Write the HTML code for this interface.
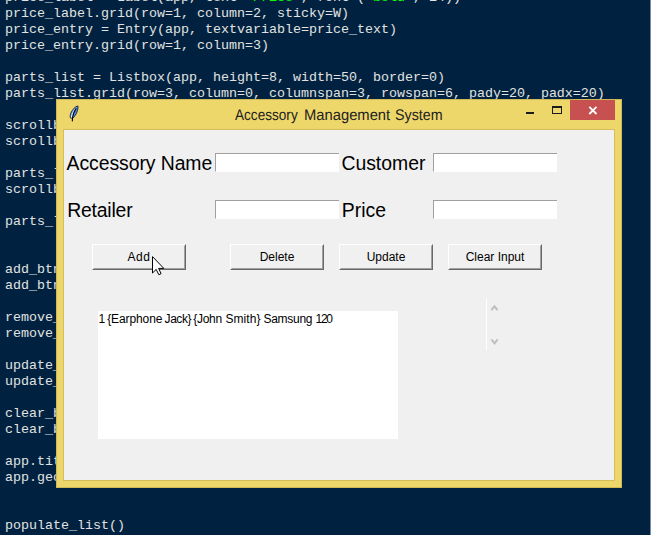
<!DOCTYPE html>
<html>
<head>
<meta charset="utf-8">
<title>Accessory Management System</title>
<style>
html,body{margin:0;padding:0;}
body{width:651px;height:535px;overflow:hidden;background:#002240;position:relative;font-family:"Liberation Sans",sans-serif;}
#code{position:absolute;left:5px;top:-10px;margin:0;font-family:"Liberation Mono",monospace;font-size:13.333px;line-height:16px;color:#e2e2e2;white-space:pre;}
#code .s{color:#02ff02;}
#win{position:absolute;left:56px;top:99px;width:566px;height:389px;background:#eed76a;box-sizing:border-box;border:1px solid #cfb856;}
#title{position:absolute;left:178.6px;top:6.8px;width:300px;height:18px;white-space:pre;font-size:15.4px;line-height:18px;color:#222;}
#title span{position:absolute;top:0;transform-origin:0 0;text-rendering:geometricPrecision;}
#close{position:absolute;left:513px;top:0;width:45px;height:20px;background:#c75050;}
#client{position:absolute;left:7px;top:30px;width:550px;height:350px;background:#f0f0f0;box-shadow:0 0 0 1px #d4bd5a;}
.lbl{position:absolute;font-size:19.4px;line-height:22px;color:#000;white-space:nowrap;}
.ent{position:absolute;width:124px;height:19px;background:#fff;box-sizing:border-box;border-top:1px solid #a0a0a0;border-left:1px solid #a0a0a0;border-bottom:1px solid #fff;}
.btn{position:absolute;width:94px;height:26px;box-sizing:border-box;background:#f0f0f0;border-top:1px solid #fff;border-left:1px solid #fff;border-right:1px solid #696969;border-bottom:1px solid #696969;font-size:12px;line-height:24px;text-align:center;color:#000;}
.btn i{position:absolute;left:0;top:0;right:0;bottom:0;border-right:1px solid #a0a0a0;border-bottom:1px solid #a0a0a0;border-top:1px solid #f0f0f0;border-left:1px solid #f0f0f0;}
.btn span{position:relative;}
#list{position:absolute;left:34px;top:181px;width:300px;height:128px;background:#fff;font-size:12px;line-height:16px;color:#000;white-space:nowrap;}
#list div{position:relative;height:16px;}
#list .w{position:absolute;top:0;white-space:pre;}
</style>
</head>
<body>
<pre id="code">price_label = Label(app, text=<span class="s">'Price'</span>, font=(<span class="s">'bold'</span>, 14))
price_label.grid(row=1, column=2, sticky=W)
price_entry = Entry(app, textvariable=price_text)
price_entry.grid(row=1, column=3)

parts_list = Listbox(app, height=8, width=50, border=0)
parts_list.grid(row=3, column=0, columnspan=3, rowspan=6, pady=20, padx=20)

scrollbar = Scrollbar(app)
scrollbar.grid(row=3, column=3)

parts_list.configure(yscrollcommand=scrollbar.set)
scrollbar.configure(command=parts_list.yview)

parts_list.bind(<span class="s">'&lt;&lt;ListboxSelect&gt;&gt;'</span>, select_item)


add_btn = Button(app, text=<span class="s">'Add'</span>, width=12, command=add_item)
add_btn.grid(row=2, column=0, pady=20)

remove_btn = Button(app, text=<span class="s">'Delete'</span>, width=12, command=remove_item)
remove_btn.grid(row=2, column=1)

update_btn = Button(app, text=<span class="s">'Update'</span>, width=12, command=update_item)
update_btn.grid(row=2, column=2)

clear_btn = Button(app, text=<span class="s">'Clear Input'</span>, width=12, command=clear_text)
clear_btn.grid(row=2, column=3)

app.title(<span class="s">'Accessory Management System'</span>)
app.geometry(<span class="s">'550x350'</span>)


populate_list()
</pre>
<div id="edge" style="position:absolute;left:650px;top:0;width:1px;height:535px;background:#7b8ea5"></div>
<div id="win">
  <svg id="icon" style="position:absolute;left:11px;top:4px" width="12" height="20" viewBox="68 104 12 20">
    <path d="M77.9 105.9 C75 106.6 72.4 109.6 70.9 113 C70.2 114.8 70 116.6 70.3 117.8 L72.6 118.4 C74.6 116.6 76.4 113.8 77.4 110.8 C78 109 78.2 107.2 77.9 105.9 Z" fill="#4f8de4" stroke="#16203a" stroke-width="0.9"/>
    <path d="M76.6 107.3 C74.6 108.4 72.6 111 71.6 113.6 C71 115.2 70.9 116.4 71 117.2 L72.3 117.4 C72.8 114 74.4 110.4 76.6 107.3 Z" fill="#b4d4f8"/>
    <path d="M76.2 108.4 C74.4 111 73.1 114 72.6 117.2 L72.3 121.4" stroke="#000" stroke-width="1.1" fill="none"/>
    <circle cx="71.5" cy="116.7" r="0.7" fill="#fff"/>
  </svg>
  <div id="title"><span style="left:-0.5px;transform:scaleX(0.883)">Accessory </span><span style="left:68.4px;transform:scaleX(0.959)">Management </span><span style="left:159.7px;transform:scaleX(0.927)">System</span></div>
  <div id="min" style="position:absolute;left:469px;top:12px;width:8px;height:2px;background:#1a1a1a"></div>
  <div id="max" style="position:absolute;left:495px;top:6px;width:10px;height:8px;box-sizing:border-box;border:1px solid #1a1a1a;border-top-width:2px"></div>
  <div id="close">
    <svg width="45" height="20" viewBox="0 0 45 20" style="position:absolute;left:0;top:0"><path d="M19.3 6.8 L26.5 14 M26.5 6.8 L19.3 14" stroke="#fff" stroke-width="1.8" fill="none"/></svg>
  </div>
  <div id="client">
    <div class="lbl" style="left:2.6px;top:22px;letter-spacing:-0.07px">Accessory Name</div>
    <div class="lbl" style="left:3.2px;top:69px;letter-spacing:-0.2px">Retailer</div>
    <div class="lbl" style="left:277.4px;top:22px">Customer</div>
    <div class="lbl" style="left:277.8px;top:69px">Price</div>
    <div class="ent" style="left:151px;top:23px"></div>
    <div class="ent" style="left:151px;top:70px"></div>
    <div class="ent" style="left:369px;top:23px"></div>
    <div class="ent" style="left:369px;top:70px"></div>
    <div class="btn" style="left:28px;top:114px"><i></i><span style="letter-spacing:0.6px">Add</span></div>
    <div class="btn" style="left:166px;top:114px"><i></i><span>Delete</span></div>
    <div class="btn" style="left:275px;top:114px"><i></i><span>Update</span></div>
    <div class="btn" style="left:384px;top:114px"><i></i><span>Clear Input</span></div>
    <div id="list"><div><span class="w" id="w1" style="left:0.6px">1 </span><span class="w" id="w2" style="left:9.2px;letter-spacing:-0.1px">{Earphone </span><span class="w" id="w3" style="left:66.6px;letter-spacing:-0.45px">Jack} </span><span class="w" id="w4" style="left:95.2px;letter-spacing:-0.26px">{John </span><span class="w" id="w5" style="left:127.4px;letter-spacing:0.1px">Smith} </span><span class="w" id="w6" style="left:165.4px;letter-spacing:-0.26px">Samsung </span><span class="w" id="w7" style="left:217.6px;letter-spacing:-1.3px">120</span></div></div>
    <div id="sb" style="position:absolute;left:422px;top:169px;width:17px;height:51px;border-left:1px solid #fff;box-sizing:border-box">
      <svg width="16" height="51" viewBox="0 0 16 51" style="position:absolute;left:0;top:0">
        <path d="M4.4 11.2 L7.5 7.3 L10.6 11.2" stroke="#bfbfbf" stroke-width="2" fill="none"/>
        <path d="M4.4 40.4 L7.5 44.3 L10.6 40.4" stroke="#bfbfbf" stroke-width="2" fill="none"/>
      </svg>
    </div>
  </div>
</div>
<svg id="cursor" style="position:absolute;left:151.8px;top:255.5px" width="13" height="21" viewBox="0 0 13 21">
  <path d="M0.5 0.6 L0.5 17 L4.2 13.4 L6.8 18.7 L9.1 17.7 L6.6 12.4 L11.8 12.4 Z" fill="#fff" stroke="#000" stroke-width="1"/>
</svg>
</body>
</html>
